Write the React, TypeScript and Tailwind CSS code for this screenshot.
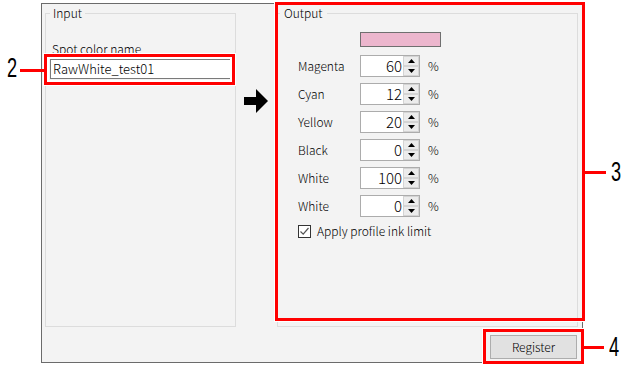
import React from 'react';

const ui = "font-['Noto_Sans_CJK_JP',sans-serif] font-light";

const rows: Array<{ label: string; value: number }> = [
  { label: 'Magenta', value: 60 },
  { label: 'Cyan', value: 12 },
  { label: 'Yellow', value: 20 },
  { label: 'Black', value: 0 },
  { label: 'White', value: 100 },
  { label: 'White', value: 0 },
];

function SpinBox({ value }: { value: number }) {
  return (
    <div className="flex h-[22px] w-[60px] border border-[#acacac] bg-white">
      <div className="flex-1 pr-[1px] text-right text-[15px] leading-[20px] text-black">{value}</div>
      <div className="flex w-[16px] flex-col">
        <div className="flex h-[10px] items-center justify-center border border-[#d4d4d4] bg-[#ececec]">
          <svg width="7" height="4" viewBox="0 0 7 4">
            <path d="M3.5 0 L7 4 L0 4 Z" fill="#000" />
          </svg>
        </div>
        <div className="flex h-[10px] items-center justify-center border border-[#d4d4d4] bg-[#ececec]">
          <svg width="7" height="4" viewBox="0 0 7 4">
            <path d="M0 0 L7 0 L3.5 4 Z" fill="#000" />
          </svg>
        </div>
      </div>
    </div>
  );
}

function Callout({ n, x, y, lineX, lineY, lineW }: { n: string; x: number; y: number; lineX: number; lineY: number; lineW: number }) {
  return (
    <>
      <div
        className="absolute origin-left scale-x-[0.65] font-['Liberation_Sans',sans-serif] text-[28px] font-normal leading-[28px] text-black"
        style={{ left: x, top: y }}
      >
        {n}
      </div>
      <div className="absolute h-[3px] bg-[#ff0000]" style={{ left: lineX, top: lineY, width: lineW }} />
    </>
  );
}

export default function App() {
  return (
    <div className={`relative h-[367px] w-[624px] overflow-hidden bg-white ${ui} text-black`}>
      {/* dialog */}
      <div className="ml-[41px] mt-[3px] flex h-[360px] w-[542px] flex-col border border-[#6b6b6b] bg-[#f3f3f3] pl-[3px] pt-[2px]">
        <div className="flex items-start">
          <fieldset className="h-[321px] w-[191px] border border-[#dcdcdc] px-[4px]">
            <legend className="ml-[0px] px-[3px] text-[12px] leading-[14px]">Input</legend>
            <div className="ml-[2px] mt-[22px] text-[12px] leading-[14px]">Spot color name</div>
            <div className="mt-[3px] flex h-[20px] w-[181px] items-center border border-[#7a7a7a] bg-white pl-[2px] text-[13px]">
              RawWhite_test01
            </div>
          </fieldset>

          <div className="w-[41px] pl-[8px] pt-[83px]">
            <svg width="24" height="24" viewBox="0 0 24 24">
              <rect x="0" y="8" width="13" height="8" fill="#000" />
              <path d="M12 0 L24 12 L12 24 Z" fill="#000" />
            </svg>
          </div>

          <fieldset className="h-[321px] w-[301px] border border-[#dcdcdc] pl-[20px]">
            <legend className="ml-[-18px] px-[4px] text-[12px] leading-[14px]">Output</legend>
            <div className="ml-[62px] mt-[12px] h-[15px] w-[81px] border border-[#6f6f6f] bg-[#ecb6cd]" />
            <div className="mt-[8px] flex flex-col gap-[6px]">
              {rows.map((r, i) => (
                <div key={i} className="flex h-[22px] items-center">
                  <div className="w-[62px] text-[12px]">{r.label}</div>
                  <SpinBox value={r.value} />
                  <div className="ml-[8px] text-[12px]">%</div>
                </div>
              ))}
            </div>
            <div className="mt-[7px] flex items-center gap-[6px]">
              <div className="flex h-[13px] w-[13px] items-center justify-center border border-[#333] bg-white">
                <svg width="11" height="11" viewBox="0 0 11 11">
                  <path d="M1.5 5.5 L4.2 8.2 L9.5 2" fill="none" stroke="#555" strokeWidth="1.2" />
                </svg>
              </div>
              <span className="text-[12px] leading-[14px]">Apply profile ink limit</span>
            </div>
          </fieldset>
        </div>

        <div className="mt-[8px] flex justify-end pr-[5px]">
          <button className="h-[24px] w-[87px] border border-[#adadad] bg-[#e1e1e1] text-[12px] leading-[14px]">
            Register
          </button>
        </div>
      </div>

      {/* annotations */}
      <div className="absolute left-[44px] top-[54px] h-[31px] w-[191px] border-[3px] border-[#ff0000] shadow-[0_0_0_1px_#fff,inset_0_0_0_2px_#fff]" />
      <div className="absolute left-[275px] top-[2px] h-[319px] w-[310px] border-[3px] border-[#ff0000] shadow-[0_0_0_1px_#fff]" />
      <div className="absolute left-[483px] top-[329px] h-[35px] w-[101px] border-[3px] border-[#ff0000] shadow-[0_0_0_1px_#fff]" />

      <Callout n="2" x={7} y={54} lineX={20} lineY={69} lineW={24} />
      <Callout n="3" x={611} y={158} lineX={585} lineY={171} lineW={21} />
      <Callout n="4" x={609} y={333} lineX={584} lineY={346} lineW={20} />
    </div>
  );
}
